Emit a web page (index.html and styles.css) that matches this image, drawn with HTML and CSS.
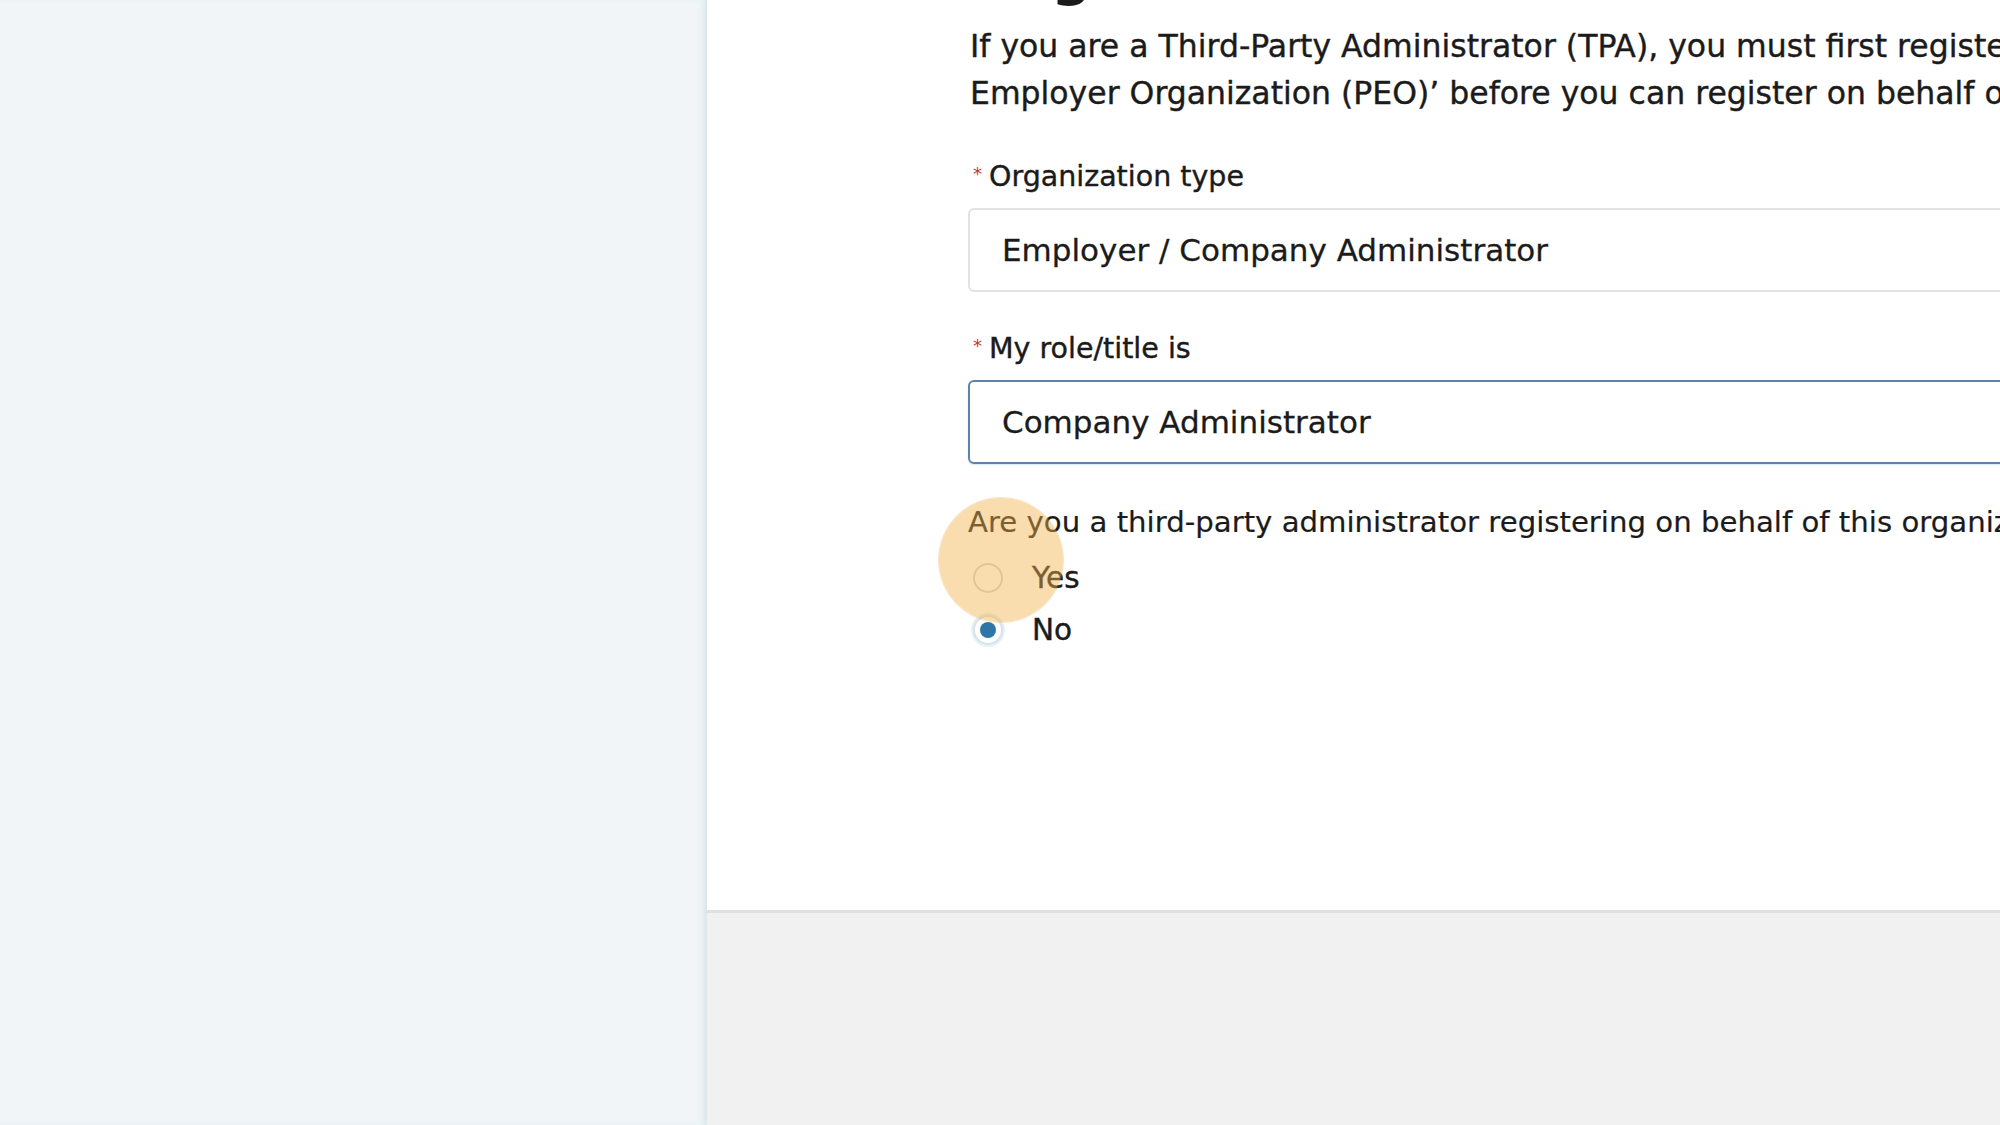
FILE: index.html
```html
<!DOCTYPE html>
<html lang="en">
<head>
<meta charset="utf-8">
<title>Organization Information</title>
<link rel="stylesheet" href="styles.css">
</head>
<body>
<div class="page">
  <aside class="side"></aside>
  <div class="main">
    <section class="content">
      <div class="form">
        <h2 class="title">Organization Information</h2>
        <p class="intro">If you are a Third-Party Administrator (TPA), you must first register as a ‘Professional<br>Employer Organization (PEO)’ before you can register on behalf of your clients.</p>

        <div class="field">
          <label class="label"><span class="req">*</span>Organization type</label>
          <div class="input">Employer / Company Administrator</div>
        </div>

        <div class="field">
          <label class="label"><span class="req">*</span>My role/title is</label>
          <div class="input input-focus">Company Administrator</div>
        </div>

        <div class="question">Are you a third-party administrator registering on behalf of this organization?</div>
        <div class="radios">
          <label class="radio"><span class="dot"></span>Yes</label>
          <label class="radio"><span class="dot dot-on"></span>No</label>
        </div>
      </div>
      <span class="click-ring"></span>
    </section>
    <footer class="footer"></footer>
  </div>
</div>
</body>
</html>
```

FILE: styles.css
```css
html, body {
  margin: 0;
  padding: 0;
  width: 2000px;
  height: 1125px;
  overflow: hidden;
  background: #ffffff;
  font-family: "DejaVu Sans", Verdana, sans-serif;
  color: #1b1b1b;
}

.page {
  display: flex;
  width: 2000px;
  height: 1125px;
}

.side {
  width: 707px;
  flex: 0 0 707px;
  background: #f1f5f8;
  box-shadow: inset -6px 0 8px -4px rgba(200, 225, 230, 0.6);
}

.main {
  flex: 1 1 auto;
  display: flex;
  flex-direction: column;
  min-width: 0;
  box-shadow: -2px 0 6px rgba(0, 0, 0, 0.04);
}

.content {
  position: relative;
  display: flow-root;
  height: 910px;
  flex: 0 0 910px;
  overflow: hidden;
  background: #ffffff;
  padding-left: 261px;
}

.form {
  width: 1600px;
}

.title {
  margin: -57px 0 0 0;
  font-size: 56px;
  line-height: 64px;
  font-weight: bold;
  letter-spacing: 4px;
  color: #1b1b1b;
  white-space: nowrap;
}

.intro {
  margin: 16px 0 0 2px;
  font-size: 31.5px;
  line-height: 47px;
  white-space: nowrap;
  -webkit-text-stroke: 0.4px #1b1b1b;
}

.field {
  display: flex;
  flex-direction: column;
}

.label {
  margin-top: 40px;
  font-size: 28.5px;
  line-height: 40px;
  padding-left: 5px;
  position: relative;
  -webkit-text-stroke: 0.4px #1b1b1b;
}

.field + .field .label {
  margin-top: 37px;
}

.req {
  color: #c0392b;
  font-size: 18px;
  line-height: 18px;
  vertical-align: 6px;
  margin-right: 7px;
  -webkit-text-stroke: 0;
}

.input {
  margin-top: 11px;
  box-sizing: border-box;
  height: 84px;
  width: 1500px;
  border: 2px solid #e2e2e2;
  border-radius: 6px;
  padding-left: 32px;
  font-size: 31px;
  line-height: 80px;
  background: #ffffff;
  white-space: nowrap;
  -webkit-text-stroke: 0.3px #1b1b1b;
}

.input-focus {
  border-color: #5f82aa;
  box-shadow: 0 1px 2px rgba(120, 190, 220, 0.35);
}

.question {
  margin-top: 38px;
  font-size: 29.2px;
  line-height: 40px;
  white-space: nowrap;
  -webkit-text-stroke: 0.2px #1b1b1b;
}

.radios {
  margin-top: 10px;
  display: flex;
  flex-direction: column;
}

.radio {
  display: flex;
  align-items: center;
  height: 52px;
  font-size: 29.5px;
  line-height: 52px;
  -webkit-text-stroke: 0.4px #1b1b1b;
}

.dot {
  box-sizing: border-box;
  width: 30px;
  height: 30px;
  margin-left: 5px;
  margin-right: 29px;
  border: 2px solid #cdd5db;
  border-radius: 50%;
  background: #ffffff;
  display: flex;
  align-items: center;
  justify-content: center;
}

.dot-on {
  border-color: #d6e3ea;
  box-shadow: 0 0 0 2px rgba(215, 230, 238, 0.6);
}

.dot-on::after {
  content: "";
  width: 16px;
  height: 16px;
  border-radius: 50%;
  background: #2f76a6;
}

.click-ring {
  position: absolute;
  left: 232px;
  top: 498px;
  width: 124px;
  height: 124px;
  border-radius: 50%;
  background: rgba(243, 180, 76, 0.45);
  box-shadow: 0 0 0 1px rgba(235, 170, 70, 0.3);
  pointer-events: none;
}

.footer {
  flex: 1 1 auto;
  background: #f1f1f1;
  border-top: 3px solid #e0e0e0;
}
```
